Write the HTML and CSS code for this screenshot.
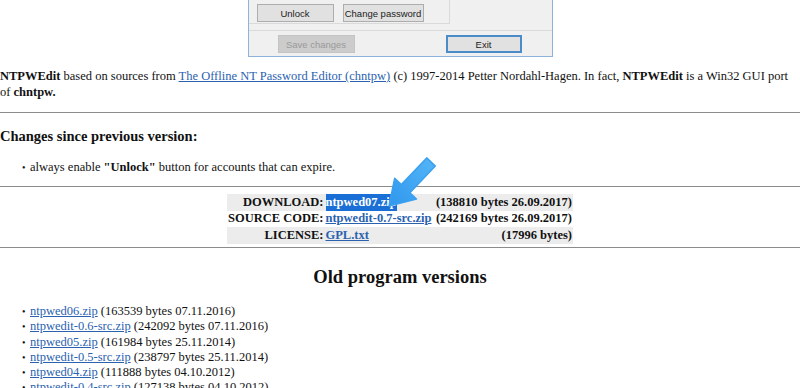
FILE: index.html
```html
<!DOCTYPE html>
<html>
	<head>
		<meta charset="utf-8">
		<meta name="viewport" content="width=device-width, initial-scale=1.0">
		<title>NTPWEdit</title>
		<link rel="stylesheet" href="styles.css">
	</head>
	<body>

		<!-- program window screenshot -->
		<div class="shot">
			<div class="shot-top">
				<div class="shot-group">
					<span class="btn btn-unlock">Unlock</span>
					<span class="btn btn-change">Change password</span>
				</div>
			</div>
			<div class="shot-bottom">
				<span class="btn btn-save">Save changes</span>
				<span class="btn btn-exit">Exit</span>
			</div>
		</div>

		<p class="intro"><b>NTPWEdit</b> based on sources from <a href="#">The Offline NT Password Editor (chntpw)</a> (c) 1997-2014 Petter Nordahl-Hagen. In fact, <b>NTPWEdit</b> is a Win32 GUI port of <b>chntpw.</b></p>

		<hr>

		<h3 class="changes">Changes since previous version:</h3>
		<ul class="bul changes-list">
			<li>always enable <b>"Unlock"</b> button for accounts that can expire.</li>
		</ul>

		<hr>

		<div class="dl">
			<table class="dl-table">
				<tr class="odd">
					<td class="lbl">DOWNLOAD:</td>
					<td><a href="#" class="sel">ntpwed07.zip</a></td>
					<td class="size">(138810 bytes 26.09.2017)</td>
				</tr>
				<tr>
					<td class="lbl">SOURCE CODE:</td>
					<td><a href="#">ntpwedit-0.7-src.zip</a></td>
					<td class="size">(242169 bytes 26.09.2017)</td>
				</tr>
				<tr class="odd">
					<td class="lbl">LICENSE:</td>
					<td><a href="#">GPL.txt</a></td>
					<td class="size">(17996 bytes)</td>
				</tr>
			</table>
			<!-- arrow pointing at the download link -->
			<svg class="arrow" width="64" height="60" viewBox="0 0 64 60">
				<defs>
					<linearGradient id="ag" x1="1" y1="0" x2="0" y2="1">
						<stop offset="0" stop-color="#55b6f7"/>
						<stop offset="1" stop-color="#2f97ee"/>
					</linearGradient>
				</defs>
				<polygon points="11,56 38.5,49 31.9,42.7 57.3,16.1 48.7,7.9 23.3,34.5 16.7,28.2" fill="url(#ag)" stroke="#3aa0f0" stroke-width="1.5" stroke-linejoin="round"/>
			</svg>
		</div>

		<hr>

		<h2 class="old">Old program versions</h2>
		<ul class="bul old-list">
			<li><a href="#">ntpwed06.zip</a> (163539 bytes 07.11.2016)</li>
			<li><a href="#">ntpwedit-0.6-src.zip</a> (242092 bytes 07.11.2016)</li>
			<li><a href="#">ntpwed05.zip</a> (161984 bytes 25.11.2014)</li>
			<li><a href="#">ntpwedit-0.5-src.zip</a> (238797 bytes 25.11.2014)</li>
			<li><a href="#">ntpwed04.zip</a> (111888 bytes 04.10.2012)</li>
			<li><a href="#">ntpwedit-0.4-src.zip</a> (127138 bytes 04.10.2012)</li>
		</ul>

	</body>
</html>
```

FILE: styles.css
```css
body{
	margin: 0;
	font-family: "Liberation Serif", "Times New Roman", serif;
	font-size: 12.5px;
	line-height: 15px;
	color: #111;
	background: #fff;
	overflow: hidden;
}
a{
	color: #2a62b0;
	text-decoration: underline;
}

/* window screenshot */
.shot{
	width: 303px;
	height: 56px;
	margin: 0 auto;
	border: 1px solid #8db3da;
	border-top: 0;
	background: #f0f0f0;
	font-family: "Liberation Sans", Arial, sans-serif;
	font-size: 9.5px;
	color: #222;
}
.shot-top{
	height: 30px;
	border-bottom: 1px solid #dadada;
}
.shot-group{
	display: flex;
	gap: 9px;
	width: 201px;
	height: 24px;
	padding: 4px 0 0 8px;
	box-sizing: border-box;
	border-right: 1px solid #dadada;
	border-bottom: 1px solid #dadada;
}
.shot-bottom{
	display: flex;
	padding: 4px 0 0 29px;
}
.btn{
	display: flex;
	flex: none;
	align-items: center;
	justify-content: center;
	height: 18px;
	box-sizing: border-box;
	border: 1px solid #adadad;
	background: #e1e1e1;
	white-space: nowrap;
}
.btn-unlock{ width: 77px; }
.btn-change{ width: 81px; }
.btn-save{
	width: 77px;
	border-color: #c4c4c4;
	background: #cccccc;
	color: #9a9a9a;
}
.btn-exit{
	width: 76px;
	margin-left: 91px;
	border: 2px solid #4a8cc8;
}

.intro{
	margin: 12px 0 0;
	line-height: 15.5px;
}

hr{
	height: 0;
	margin: 12px 0 0;
	border: 0;
	border-top: 1px solid #8c8c8c;
}

.changes{
	margin: 15px 0 0;
	font-size: 14.5px;
	line-height: 17px;
}

.bul{
	margin: 0;
	padding-left: 31px;
	list-style: none;
}
.bul li::before{
	content: '•';
	display: inline-block;
	width: 8px;
	margin-left: -9px;
	font-size: 10px;
}
.changes-list{
	margin-top: 15px;
}
.changes-list + hr{
	margin-top: 11px;
}

/* download table */
.dl{
	position: relative;
	margin-top: 7px;
}
.dl-table{
	margin: 0 auto;
	width: 346px;
	border-collapse: collapse;
	font-weight: bold;
}
.dl-table td{
	height: 16.5px;
	padding: 0 1px;
	white-space: nowrap;
}
.dl-table .odd{
	background: #ececec;
}
.lbl{
	text-align: right;
	width: 95px;
}
.size{
	text-align: right;
}
.sel{
	background: #1a6fd6;
	color: #fff;
	text-decoration: none;
	padding: 1px 0 2px;
}
.arrow{
	position: absolute;
	left: 378px;
	top: -44px;
}
.dl + hr{
	margin-top: 3.5px;
}

.old{
	margin: 19px 0 0;
	text-align: center;
	font-size: 18.5px;
	line-height: 21px;
}
.old-list{
	margin-top: 16px;
	line-height: 14.3px;
}
```
